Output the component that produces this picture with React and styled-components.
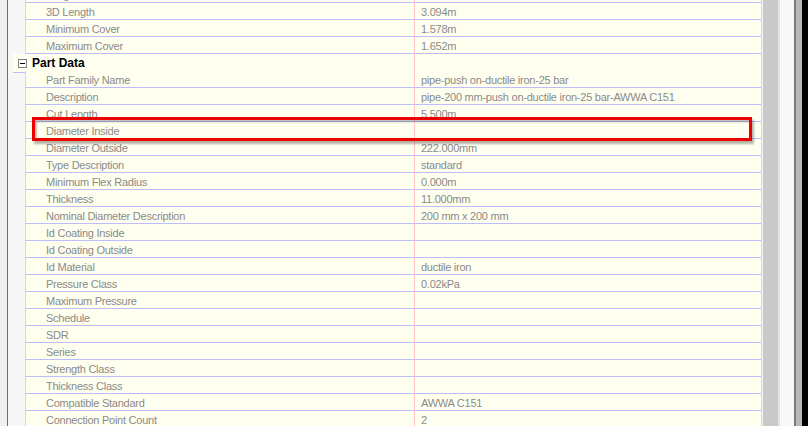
import styled, { createGlobalStyle } from 'styled-components';

const GlobalStyle = createGlobalStyle`
  html, body {
    margin: 0;
    padding: 0;
    background: #f0f0f0;
    overflow: hidden;
  }
`;

const rows = [
  { name: 'Length', value: '' },
  { name: '3D Length', value: '3.094m' },
  { name: 'Minimum Cover', value: '1.578m' },
  { name: 'Maximum Cover', value: '1.652m' },
  { header: 'Part Data' },
  { name: 'Part Family Name', value: 'pipe-push on-ductile iron-25 bar' },
  { name: 'Description', value: 'pipe-200 mm-push on-ductile iron-25 bar-AWWA C151' },
  { name: 'Cut Length', value: '5.500m' },
  { name: 'Diameter Inside', value: '' },
  { name: 'Diameter Outside', value: '222.000mm' },
  { name: 'Type Description', value: 'standard' },
  { name: 'Minimum Flex Radius', value: '0.000m' },
  { name: 'Thickness', value: '11.000mm' },
  { name: 'Nominal Diameter Description', value: '200 mm x 200 mm' },
  { name: 'Id Coating Inside', value: '' },
  { name: 'Id Coating Outside', value: '' },
  { name: 'Id Material', value: 'ductile iron' },
  { name: 'Pressure Class', value: '0.02kPa' },
  { name: 'Maximum Pressure', value: '' },
  { name: 'Schedule', value: '' },
  { name: 'SDR', value: '' },
  { name: 'Series', value: '' },
  { name: 'Strength Class', value: '' },
  { name: 'Thickness Class', value: '' },
  { name: 'Compatible Standard', value: 'AWWA C151' },
  { name: 'Connection Point Count', value: '2' },
];

//Frame - whole window strip
const App = () => {
  return (
    <>
      <GlobalStyle />
      <Frame>
        <LeftEdge />
        <Grid>
          <RowList>
            {rows.map((row, i) =>
              row.header ? (
                <HeaderRow key={i}>
                  <HeaderLead>
                    <Toggle>
                      <svg width='9' height='9' viewBox='0 0 9 9'>
                        <rect x='0.5' y='0.5' width='8' height='8' fill='#fff' stroke='#808080' />
                        <line x1='2' y1='4.5' x2='7' y2='4.5' stroke='#000' />
                      </svg>
                    </Toggle>
                    <HeaderText>{row.header}</HeaderText>
                  </HeaderLead>
                  <ValueCell />
                </HeaderRow>
              ) : (
                <Row key={i}>
                  <Gutter />
                  <NameCell>{row.name}</NameCell>
                  <ValueCell>{row.value}</ValueCell>
                </Row>
              )
            )}
          </RowList>
          <Highlight />
        </Grid>
        <ScrollTrack />
        <RightFrame />
      </Frame>
    </>
  );
};

const Frame = styled.div`
  display: flex;
  height: 426px;
  width: 808px;
  overflow: hidden;
  position: relative;
  font-family: 'Liberation Sans', Arial, sans-serif;
  font-size: 11px;
  letter-spacing: -0.25px;
`;

const LeftEdge = styled.div`
  width: 7px;
  flex: none;
  background: #f0f0f0;
  border-right: 1px solid #6e6e6e;
`;

const Grid = styled.div`
  width: 753px;
  flex: none;
  background: #f7f7f7;
  position: relative;
  overflow: hidden;
  border-right: 1px solid #ffc4c4;
`;

const RowList = styled.div`
  margin-top: -14px;
  display: flex;
  flex-direction: column;
`;

const Row = styled.div`
  display: grid;
  grid-template-columns: 18px 388px 1fr;
  height: 17px;
`;

const Gutter = styled.div`
  border-right: 1px solid #ffc4c4;
`;

const NameCell = styled.div`
  background: #fffff0;
  border-bottom: 1px solid #bcbcff;
  color: #8a8a8a;
  padding-left: 20px;
  line-height: 18px;
  white-space: nowrap;
  overflow: hidden;
`;

const ValueCell = styled.div`
  background: #fffff0;
  border-bottom: 1px solid #bcbcff;
  border-left: 1px solid #ffc4c4;
  color: #8a8a8a;
  padding-left: 6px;
  line-height: 18px;
  white-space: nowrap;
  overflow: hidden;
`;

const HeaderRow = styled.div`
  display: grid;
  grid-template-columns: 406px 1fr;
  height: 17px;
`;

const HeaderLead = styled.div`
  display: flex;
  align-items: center;
  margin-left: 5px;
  background: #fffff0;
  border-bottom: 1px solid #bcbcff;
`;

const Toggle = styled.span`
  display: flex;
  margin-left: 5px;
  margin-right: 5px;
  padding-top: 1px;
`;

const HeaderText = styled.span`
  font-weight: bold;
  font-size: 12px;
  letter-spacing: 0;
  color: #000;
  line-height: 18px;
`;

// red callout drawn over the grid
const Highlight = styled.div`
  position: absolute;
  left: 24px;
  top: 117px;
  width: 720px;
  height: 24px;
  box-sizing: border-box;
  border: 3px solid #ee0000;
  box-shadow: 2px 3px 2px rgba(0, 0, 0, 0.3), inset 2px 2px 2px rgba(0, 0, 0, 0.25);
  pointer-events: none;
`;

const ScrollTrack = styled.div`
  width: 15px;
  flex: none;
  background: #c9c9c9;
  border-left: 1px solid #f4f4f4;
  border-right: 2px solid #e2e2e2;
`;

const RightFrame = styled.div`
  flex: 1;
  background: linear-gradient(
    to right,
    #f8f8f8 0 14px,
    #7c7c7c 14px 16px,
    #b8b8b8 16px 22px,
    #000 22px
  );
`;

export default App;
